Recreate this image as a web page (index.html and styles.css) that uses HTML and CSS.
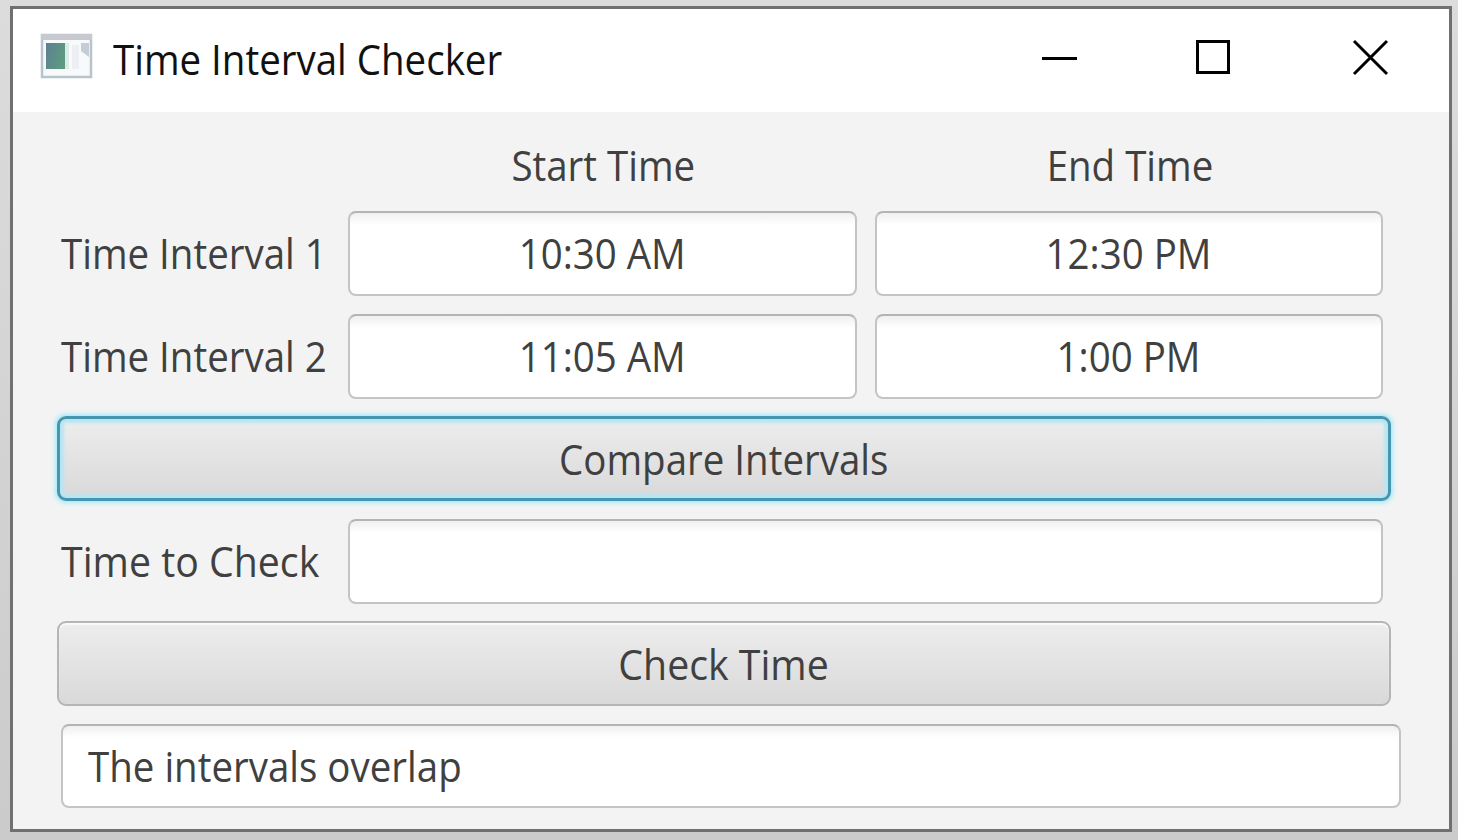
FILE: index.html
```
<!DOCTYPE html>
<html lang="en">
<head>
    <meta charset="UTF-8">
    <meta name="viewport" content="width=device-width, initial-scale=1.0">
    <title>Time Interval Checker</title>
    <link rel="stylesheet" href="styles.css">
</head>
<body>
    <div class="window">
        <div class="title-bar">
            <svg class="app-icon" width="54" height="48" viewBox="0 0 54 48">
                <rect x="2" y="2" width="49" height="42" fill="#f7f9fb" stroke="#b9c4ca" stroke-width="2.5"/>
                <rect x="1" y="1" width="51" height="6" fill="#c6c9cf"/>
                <linearGradient id="pane" x1="0" y1="0" x2="1" y2="0.4">
                    <stop offset="0" stop-color="#5d8094"/>
                    <stop offset="1" stop-color="#5d9a80"/>
                </linearGradient>
                <rect x="6" y="10" width="19" height="26" fill="url(#pane)"/>
                <rect x="25" y="10" width="4" height="26" fill="#dcebe7"/>
                <rect x="32" y="12" width="7" height="24" fill="#eceff3"/>
                <path d="M41 10h8v14l-8-6z" fill="#c6ccd5"/>
            </svg>
            <h1 class="title"><span class="text">Time Interval Checker</span></h1>
            <svg class="window-controls" width="350" height="40" viewBox="0 0 350 40">
                <path d="M2 21.500h35" stroke="#000" stroke-width="3"/>
                <rect x="157.500" y="4.500" width="31" height="31" fill="none" stroke="#000" stroke-width="3"/>
                <path d="M314 4l33 33M347 4l-33 33" stroke="#000" stroke-width="3"/>
            </svg>
        </div>

        <form class="content">
            <div class="row headings">
                <span class="label"></span>
                <span class="heading"><span class="text">Start Time</span></span>
                <span class="heading"><span class="text">End Time</span></span>
            </div>
            <div class="row">
                <span class="label"><span class="text">Time Interval 1</span></span>
                <div class="field"><span class="text">10:30 AM</span></div>
                <div class="field"><span class="text">12:30 PM</span></div>
            </div>
            <div class="row">
                <span class="label"><span class="text">Time Interval 2</span></span>
                <div class="field"><span class="text">11:05 AM</span></div>
                <div class="field"><span class="text">1:00 PM</span></div>
            </div>
            <button type="button" class="btn focused"><span class="text">Compare Intervals</span></button>
            <div class="row">
                <span class="label"><span class="text wide">Time to Check</span></span>
                <div class="field"></div>
            </div>
            <button type="button" class="btn"><span class="text wide">Check Time</span></button>
            <div class="field result"><span class="text">The intervals overlap</span></div>
        </form>
    </div>
</body>
</html>
```
FILE: styles.css
```
* { margin: 0; padding: 0; box-sizing: border-box; }

body { height: 840px; padding: 6px 6px 8px 10px; overflow: hidden; background: linear-gradient(#dcdcdc, #cbcbcb); font-family: 'Open Sans', 'Noto Sans', sans-serif; font-size: 42px; line-height: 56px; color: #404040; }

.window { height: 826px; border: 3px solid #707070; background: #f3f3f3; }

.title-bar { display: flex; align-items: flex-start; height: 103px; padding: 24px 59px 0 27px; background: white; }

.app-icon { flex: none; }

.title { flex: 1; margin: -2px 0 0 19px; font-size: 42px; font-weight: normal; color: #111; }

.window-controls { flex: none; margin-top: 4px; }

.text { display: inline-block; white-space: nowrap; transform: scaleX(0.916); }

.text.wide { transform: scaleX(0.935); }

.title .text, .label .text, .result .text { transform-origin: left; }

.content { display: flex; flex-direction: column; gap: 18px; padding: 23px 48px 0 44px; }

.row { display: flex; gap: 18px; height: 85px; padding: 0 18px 0 4px; }

.headings { height: 58px; }

.label { flex: none; width: 269px; line-height: 84px; }

.heading { flex: 1; padding-left: 2px; text-align: center; line-height: 60px; }

.field { flex: 1; height: 85px; border: 2px solid #c4c4c4; border-top-color: #b4b4b4; border-radius: 8px; background: linear-gradient(#f0f0f0, #fff 12px); text-align: center; line-height: 80px; }

.result { flex: none; height: 84px; margin: 0 0 0 4px; padding-left: 25px; text-align: left; }

.btn { width: 1334px; height: 85px; margin-top: -1px; border: 2px solid #b5b5b5; border-radius: 9px; background: linear-gradient(#ededed, #d9d9d9); box-shadow: inset 0 2px 1px #fafafa; font: inherit; line-height: 80px; color: #404040; }

.btn.focused { border: 3px solid #4596ae; box-shadow: 0 0 4px 2px #a5eafb, inset 0 0 3px 4px #b8e5f2; }
```
